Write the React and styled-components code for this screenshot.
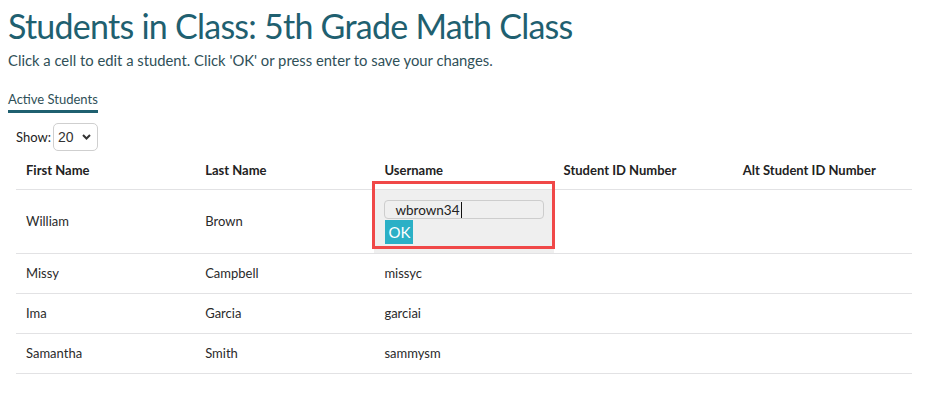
import React from "react";
import styled, { createGlobalStyle } from "styled-components";

const GlobalStyle = createGlobalStyle`
  body {
    margin: 0;
    background: #ffffff;
    font-family: Lato, "Open Sans", sans-serif;
  }
`;

const Page = styled.div`
  padding: 4px 8px 0 8px;
  position: relative;
`;

const Title = styled.h1`
  margin: 0;
  font-size: 34px;
  font-weight: 400;
  letter-spacing: -0.75px;
  color: #1f6070;
  line-height: 44px;
`;

const Subtitle = styled.p`
  margin: 2px 0 0 0;
  font-size: 14.8px;
  color: #2f5058;
  line-height: 20px;
`;

const Tabs = styled.div`
  display: flex;
  margin-top: 20px;
`;

const Tab = styled.div`
  font-size: 13px;
  color: #2f5058;
  padding-bottom: 2px;
  border-bottom: 3px solid #1f6070;
  line-height: 18px;
`;

const ShowRow = styled.div`
  display: flex;
  align-items: center;
  gap: 2px;
  margin: 10px 0 0 8px;
  font-size: 13px;
  color: #222;
`;

const Select = styled.div`
  display: flex;
  align-items: center;
  justify-content: space-between;
  width: 45px;
  height: 28px;
  box-sizing: border-box;
  padding: 0 6px 0 4px;
  border: 1px solid #cfcfcf;
  border-radius: 5px;
  font-family: "Liberation Sans", Arial, sans-serif;
  font-size: 14px;
  color: #333;
`;

const Table = styled.table`
  margin: 0 0 0 8px;
  width: 896px;
  border-collapse: collapse;
  table-layout: fixed;
  font-size: 13px;
`;

const Th = styled.th`
  text-align: left;
  font-weight: 700;
  color: #222;
  padding: 11px 10px 10px 10px;
  border-bottom: 1px solid #e2e2e4;
  line-height: 17px;
`;

const Td = styled.td`
  padding: ${(p) => (p.$editing ? "10px 10px 9px" : "11px 10px")};
  color: #2a2a2a;
  border-bottom: 1px solid #e2e2e4;
  line-height: 17px;
  vertical-align: middle;
  background: ${(p) => (p.$editing ? "#efefef" : "transparent")};
`;

const EditCell = styled.div`
  display: flex;
  flex-direction: column;
  align-items: flex-start;
  gap: 1px;
`;

const Input = styled.div`
  width: 160px;
  height: 19px;
  box-sizing: border-box;
  border: 1px solid #cdcdcd;
  border-radius: 4px;
  background: #efefef;
  padding: 0 10px;
  font-size: 13.5px;
  line-height: 16px;
  color: #222;
  display: flex;
  align-items: center;
`;

const Caret = styled.span`
  display: inline-block;
  width: 1px;
  height: 16px;
  background: #111;
  margin-left: 1px;
`;

const OkButton = styled.button`
  background: #2bb0c6;
  color: #fff;
  border: none;
  font-family: inherit;
  font-size: 15px;
  padding: 0 3px;
  height: 24px;
  line-height: 24px;
  margin-left: 1px;
`;

const Highlight = styled.div`
  position: absolute;
  left: 372px;
  top: 181px;
  width: 183px;
  height: 68px;
  box-sizing: border-box;
  border: 3px solid #f04848;
  pointer-events: none;
`;

const Chevron = () => (
  <svg width="9" height="6" viewBox="0 0 9 6">
    <path d="M1 1 L4.5 4.5 L8 1" fill="none" stroke="#333" strokeWidth="2" />
  </svg>
);

const students = [
  { first: "Missy", last: "Campbell", user: "missyc" },
  { first: "Ima", last: "Garcia", user: "garciai" },
  { first: "Samantha", last: "Smith", user: "sammysm" },
];

export default function App() {
  return (
    <>
      <GlobalStyle />
      <Page>
        <Title>Students in Class: 5th Grade Math Class</Title>
        <Subtitle>
          Click a cell to edit a student. Click 'OK' or press enter to save your changes.
        </Subtitle>
        <Tabs>
          <Tab>Active Students</Tab>
        </Tabs>
        <ShowRow>
          Show:
          <Select>
            20 <Chevron />
          </Select>
        </ShowRow>
        <Table>
          <thead>
            <tr>
              <Th>First Name</Th>
              <Th>Last Name</Th>
              <Th>Username</Th>
              <Th>Student ID Number</Th>
              <Th>Alt Student ID Number</Th>
            </tr>
          </thead>
          <tbody>
            <tr>
              <Td>William</Td>
              <Td>Brown</Td>
              <Td $editing>
                <EditCell>
                  <Input>
                    wbrown34
                    <Caret />
                  </Input>
                  <OkButton>OK</OkButton>
                </EditCell>
              </Td>
              <Td />
              <Td />
            </tr>
            {students.map((s) => (
              <tr key={s.user}>
                <Td>{s.first}</Td>
                <Td>{s.last}</Td>
                <Td>{s.user}</Td>
                <Td />
                <Td />
              </tr>
            ))}
          </tbody>
        </Table>
        <Highlight />
      </Page>
    </>
  );
}
